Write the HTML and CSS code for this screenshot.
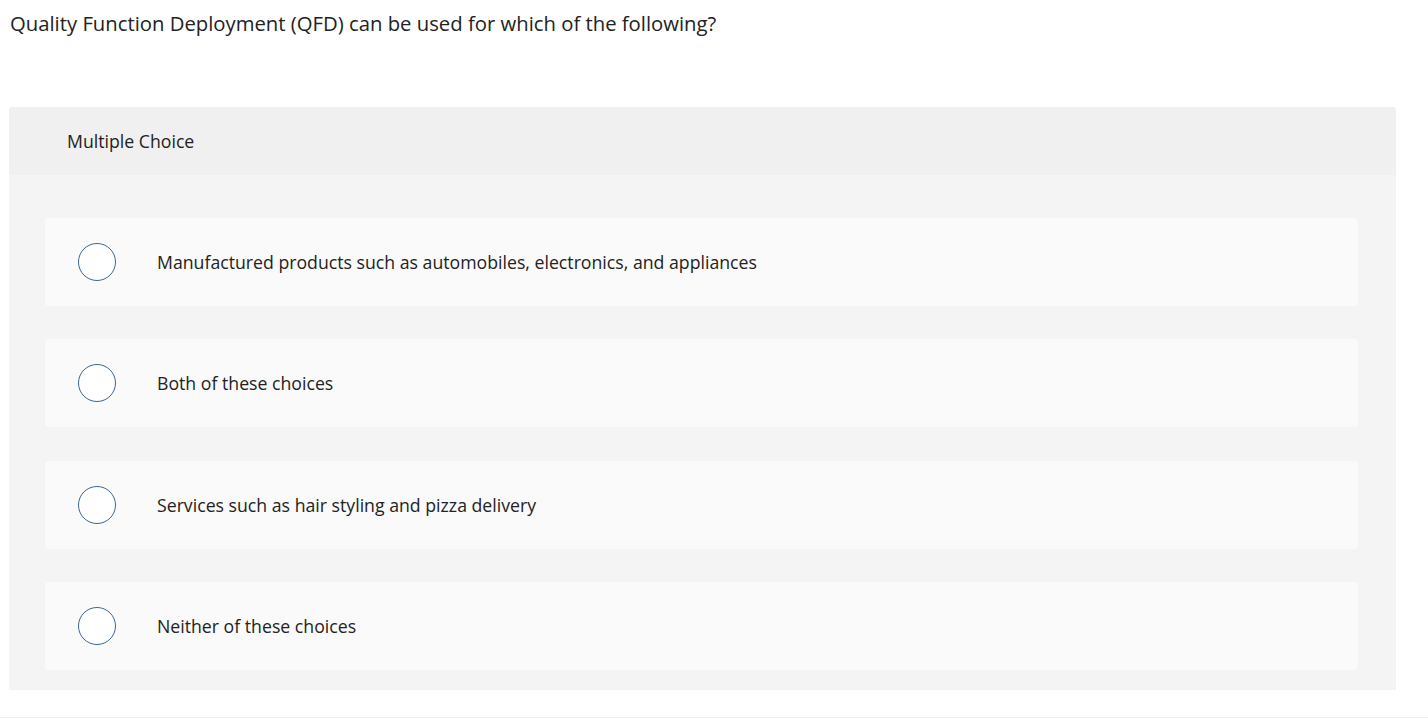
FILE: index.html
```html
<!DOCTYPE html>
<html>
<head>
<meta charset="utf-8">
<link rel="stylesheet" href="styles.css">
</head>
<body>
<div class="page">
  <h1 class="question">Quality Function Deployment (QFD) can be used for which of the following?</h1>
  <div class="panel">
    <div class="panel-head">Multiple Choice</div>
    <div class="panel-body">
      <div class="option"><span class="radio"></span><span class="label">Manufactured products such as automobiles, electronics, and appliances</span></div>
      <div class="option"><span class="radio"></span><span class="label">Both of these choices</span></div>
      <div class="option"><span class="radio"></span><span class="label">Services such as hair styling and pizza delivery</span></div>
      <div class="option"><span class="radio"></span><span class="label">Neither of these choices</span></div>
    </div>
  </div>
  <div class="rule"></div>
</div>
</body>
</html>
```
FILE: styles.css
```css
html, body {
  margin: 0;
  padding: 0;
  background: #ffffff;
}
body {
  font-family: "Open Sans", Lato, Arial, sans-serif;
  color: #222222;
}
.page {
  display: flex;
  flex-direction: column;
}
.question {
  margin: 0;
  padding: 10px 0 0 10px;
  height: 107px;
  box-sizing: border-box;
  font-size: 20.3px;
  line-height: 27px;
  font-weight: 400;
  color: #222;
}
.panel {
  margin: 0 32px 0 9px;
  border-radius: 3px 3px 0 0;
  overflow: hidden;
  background: #f4f4f4;
}
.panel-head {
  height: 68px;
  display: flex;
  align-items: center;
  padding-left: 58px;
  background: #f0f0f0;
  font-size: 17.7px;
  color: #222;
}
.panel-body {
  display: flex;
  flex-direction: column;
  gap: 33.33px;
  padding: 43px 38px 20px 36px;
}
.option {
  height: 88px;
  display: flex;
  align-items: center;
  padding-left: 33px;
  gap: 41px;
  background: #fafafa;
  border-radius: 4px;
}
.radio {
  width: 38px;
  height: 38px;
  box-sizing: border-box;
  border: 1.5px solid #3b6591;
  border-radius: 50%;
  background: #ffffff;
  flex: none;
}
.label {
  font-size: 17.7px;
  color: #222;
}
.rule {
  margin-top: 27px;
  height: 1px;
  background: #ececec;
}
```
